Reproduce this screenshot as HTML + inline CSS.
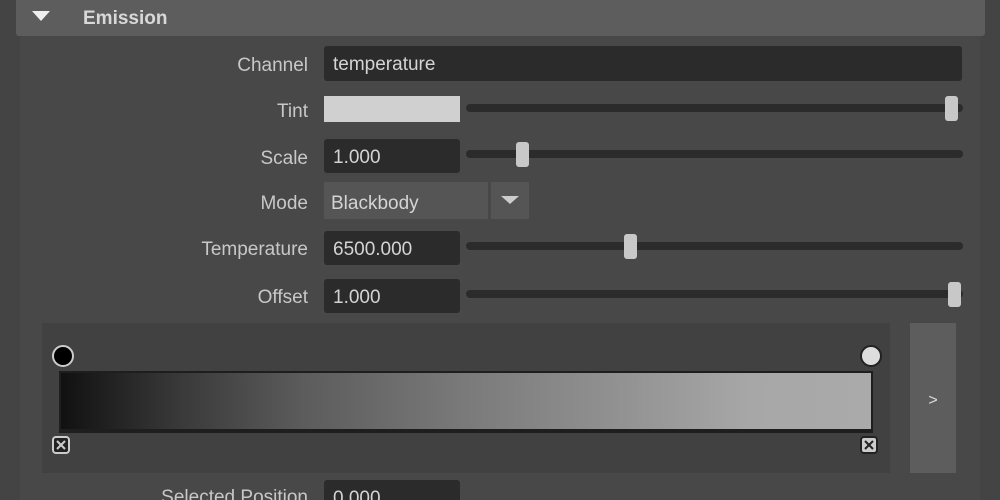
<!DOCTYPE html><html><head><style>
html,body{margin:0;width:1000px;height:500px;overflow:hidden}
body{background:#444;position:relative;font-family:"Liberation Sans",sans-serif;}
.a{position:absolute}
.lbl{position:absolute;right:692px;color:#c8c8c8;font-size:19px;text-align:right}
.f{position:absolute;background:#2b2b2b;border-radius:3px;color:#d4d4d4;font-size:19px;padding-left:9px;box-sizing:border-box;line-height:37px;overflow:hidden}
.tr{position:absolute;left:466px;width:497px;height:8px;background:#2b2b2b;border-radius:4px}
.th{position:absolute;width:13px;height:25px;background:#c8c8c8;border-radius:3px}
</style></head><body>
<div class="a" style="left:20px;top:36px;width:960px;height:464px;background:#484848"></div>
<div class="a" style="left:16px;top:0;width:969px;height:36px;background:#5d5d5d;border-radius:0 0 3px 3px"></div>
<svg class="a" style="left:30px;top:10px" width="22" height="12"><polygon points="2,1 20,1 11,11" fill="#eee"/></svg>
<div class="a" style="left:83px;top:8px;color:#d8d8d8;font-size:19px;font-weight:bold">Emission</div>

<div class="lbl" style="top:55px">Channel</div>
<div class="f" style="left:324px;top:46px;width:638px;height:35px">temperature</div>

<div class="lbl" style="top:101px">Tint</div>
<div class="a" style="left:324px;top:96px;width:136px;height:26px;background:#d0d0d0"></div>
<div class="tr" style="top:104px"></div><div class="th" style="left:945px;top:96px"></div>

<div class="lbl" style="top:148px">Scale</div>
<div class="f" style="left:324px;top:139px;width:136px;height:34px">1.000</div>
<div class="tr" style="top:150px"></div><div class="th" style="left:516px;top:142px"></div>

<div class="lbl" style="top:193px">Mode</div>
<div class="a" style="left:324px;top:182px;width:164px;height:37px;background:#555;color:#d4d4d4;font-size:19px;line-height:44px;padding-left:7px;box-sizing:border-box">Blackbody</div>
<div class="a" style="left:491px;top:182px;width:38px;height:37px;background:#555"></div>
<svg class="a" style="left:500px;top:195px" width="20" height="10"><polygon points="1,1 19,1 10,9" fill="#ccc"/></svg>

<div class="lbl" style="top:239px">Temperature</div>
<div class="f" style="left:324px;top:231px;width:136px;height:34px">6500.000</div>
<div class="tr" style="top:242px"></div><div class="th" style="left:624px;top:234px"></div>

<div class="lbl" style="top:287px">Offset</div>
<div class="f" style="left:324px;top:279px;width:136px;height:34px">1.000</div>
<div class="tr" style="top:290px"></div><div class="th" style="left:948px;top:282px"></div>

<div class="a" style="left:42px;top:323px;width:848px;height:150px;background:#414141"></div>
<div class="a" style="left:59px;top:371px;width:814px;height:62px;background:#1e1e1e"></div>
<div class="a" style="left:61px;top:373px;width:810px;height:56px;background:linear-gradient(90deg,#111 0%,#3a3a3a 15%,#5c5c5c 30%,#7a7a7a 50%,#939393 70%,#a7a7a7 85%,#aaa 100%)"></div>
<div class="a" style="left:52px;top:345px;width:18px;height:18px;border-radius:50%;background:#000;border:2px solid #ccc"></div>
<div class="a" style="left:860px;top:345px;width:18px;height:18px;border-radius:50%;background:#ddd;border:2px solid #222"></div>
<svg class="a" style="left:52px;top:436px" width="18" height="18"><rect x="1" y="1" width="16" height="16" rx="3" fill="#222" stroke="#ccc" stroke-width="2"/><path d="M5 5L13 13M13 5L5 13" stroke="#ccc" stroke-width="2"/></svg>
<svg class="a" style="left:860px;top:436px" width="18" height="18"><rect x="1" y="1" width="16" height="16" rx="3" fill="#ccc" stroke="#222" stroke-width="2"/><path d="M5 5L13 13M13 5L5 13" stroke="#222" stroke-width="2"/></svg>
<div class="a" style="left:910px;top:323px;width:46px;height:150px;background:#5d5d5d;color:#ddd;font-size:16px;text-align:center;line-height:156px">&gt;</div>

<div class="lbl" style="top:487px">Selected Position</div>
<div class="f" style="left:324px;top:480px;width:136px;height:20px;border-radius:3px 3px 0 0">0.000</div>
</body></html>
